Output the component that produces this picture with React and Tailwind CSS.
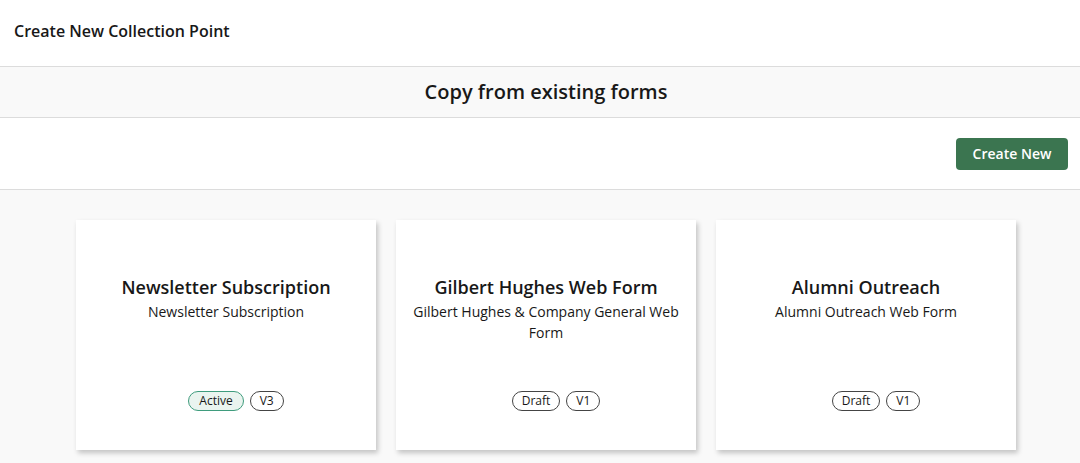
import React from 'react';

const forms = [
  { id: 1, title: 'Newsletter Subscription', desc: 'Newsletter Subscription', status: 'Active', version: 'V3' },
  { id: 2, title: 'Gilbert Hughes Web Form', desc: 'Gilbert Hughes & Company General Web Form', status: 'Draft', version: 'V1' },
  { id: 3, title: 'Alumni Outreach', desc: 'Alumni Outreach Web Form', status: 'Draft', version: 'V1' },
];

const Badge = ({ children, active }) => (
  <span
    className={`inline-flex items-center h-[20px] px-[9px] rounded-full border text-[12px] leading-none text-[#181818] ${
      active ? 'border-[#3f9c7d] bg-[#eaf4ef] px-[10px]' : 'border-[#444] bg-white'
    }`}
  >
    {children}
  </span>
);

const FormCard = ({ form }) => (
  <div className="w-[300px] h-[230px] bg-white shadow-[2px_3px_5px_rgba(0,0,0,0.22)] flex flex-col items-center px-[16px] pt-[55px]">
    <h3 className="text-[18px] font-semibold text-[#181818] leading-[24px] text-center">{form.title}</h3>
    <p className="mt-[2px] text-[14px] text-[#181818] leading-[21px] text-center">{form.desc}</p>
    <div className="mt-auto mb-[39px] pl-[20px] flex gap-[6px]">
      <Badge active={form.status === 'Active'}>{form.status}</Badge>
      <Badge>{form.version}</Badge>
    </div>
  </div>
);

export default function App() {
  return (
    <div className="w-[1080px] h-[463px] overflow-hidden bg-[#f9f9f9] font-['Open_Sans','Lato',sans-serif] text-[#181818]">
      <div className="h-[67px] bg-white flex items-center px-[14px] pb-[5px] border-b border-[#dcdcdc]">
        <h1 className="text-[16px] font-semibold">Create New Collection Point</h1>
      </div>
      <div className="h-[51px] flex items-center justify-center pl-[12px] border-b border-[#dcdcdc] bg-[#f9f9f9]">
        <h2 className="text-[20px] font-semibold">Copy from existing forms</h2>
      </div>
      <div className="h-[72px] bg-white flex items-center justify-end pr-[12px] border-b border-[#dcdcdc]">
        <button className="h-[32px] w-[112px] rounded-[4px] bg-[#3b7550] text-white text-[14px] font-semibold">
          Create New
        </button>
      </div>
      <div className="flex gap-[20px] pl-[76px] pt-[30px]">
        {forms.map((f) => (
          <FormCard key={f.id} form={f} />
        ))}
      </div>
    </div>
  );
}
